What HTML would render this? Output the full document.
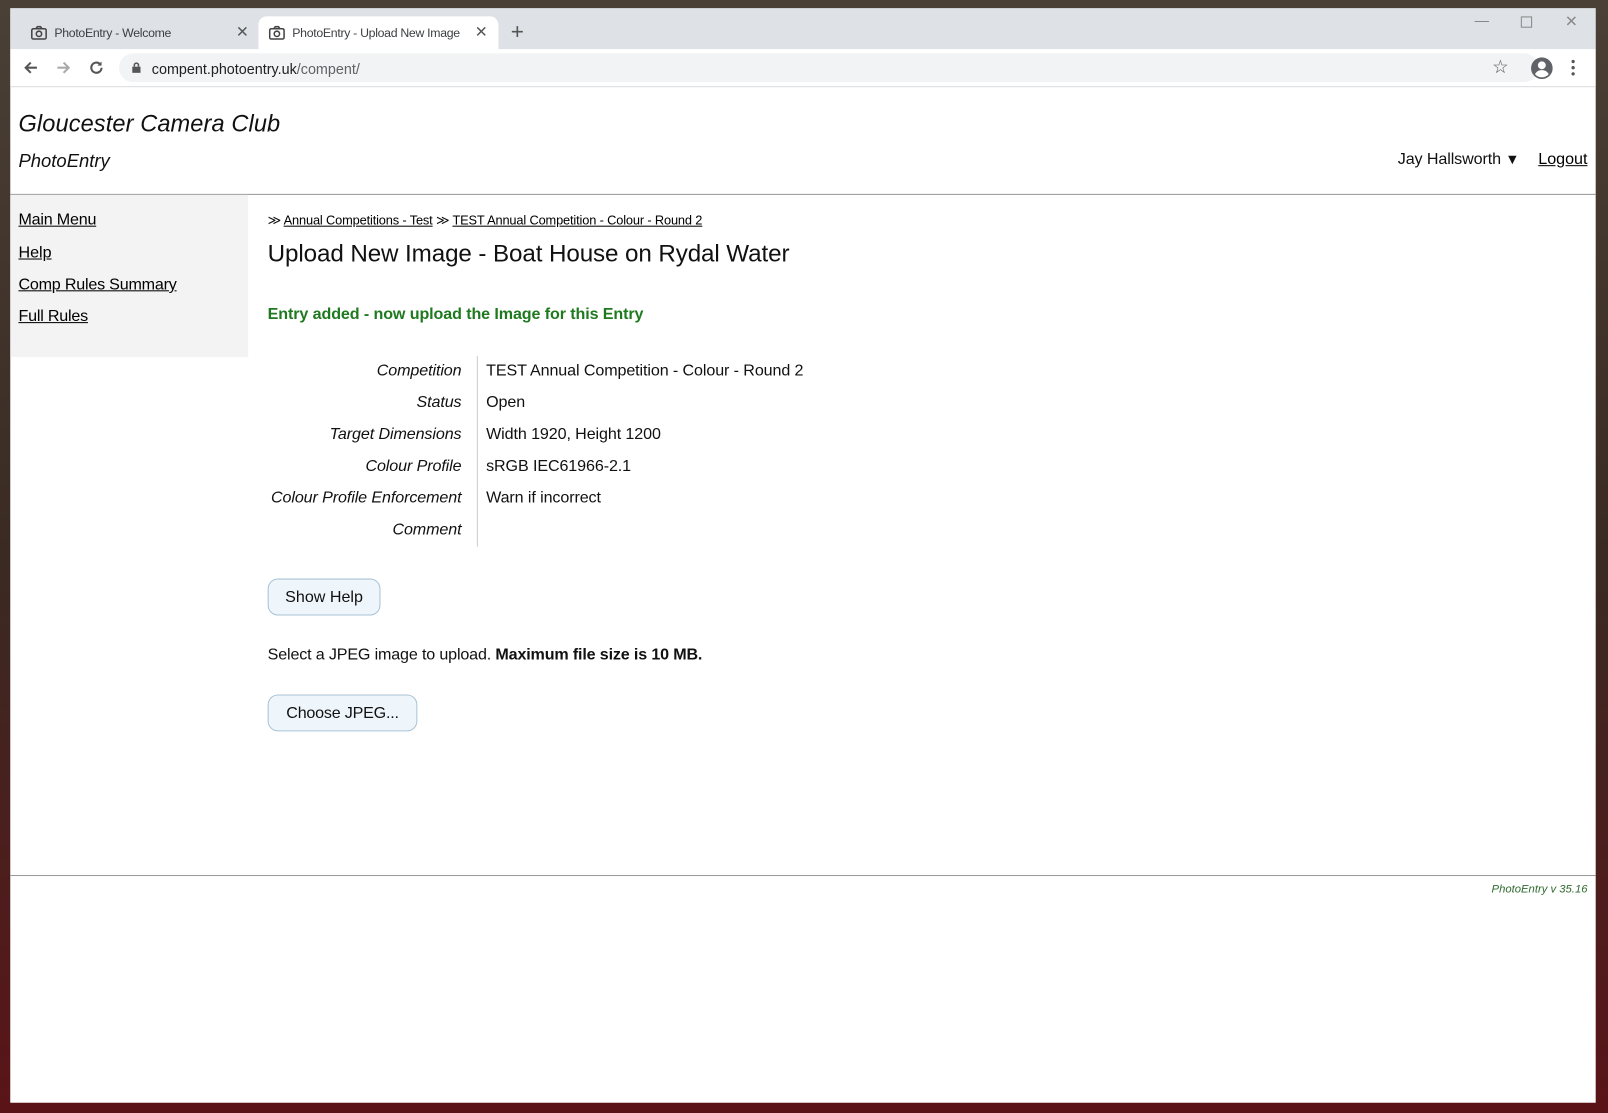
<!DOCTYPE html>
<html><head><meta charset="utf-8"><style>
html,body{margin:0;padding:0;width:1608px;height:1113px;overflow:hidden;}
body{background:linear-gradient(180deg,#4a4036 0%,#3a2a22 50%,#5a1418 100%);font-family:"Liberation Sans",Arial,sans-serif;}
#w{position:absolute;left:0;top:0;width:1568px;height:1085px;transform:scale(1.02551,1.0258);transform-origin:0 0;}
.a{position:absolute;white-space:nowrap;}
#win{position:absolute;left:10px;top:8px;width:1546px;height:1067px;background:#fff;overflow:hidden;}
#tabs{position:absolute;left:0;top:0;width:1546px;height:40px;background:#dee1e6;}
#bar{position:absolute;left:0;top:40px;width:1546px;height:36px;background:#fff;border-bottom:1px solid #dadce0;}
.tab{position:absolute;top:8px;height:32px;font-size:12px;color:#3c4043;}
a,.u{color:#000;text-decoration:underline;}
.lab{position:absolute;right:1106px;font-style:italic;font-size:15.7px;color:#111;letter-spacing:-0.1px;}
.val{position:absolute;left:464px;font-size:15.7px;color:#111;letter-spacing:-0.1px;}
.btn{position:absolute;background:#eef6fb;border:1px solid #a9c3d6;border-radius:10px;font-size:15.7px;color:#111;text-align:center;box-sizing:border-box;}
</style></head><body><div id="w">
<div id="win">
<div id="tabs">
 <div class="tab" style="left:10px;width:232px;">
  <svg class="a" style="left:10px;top:9px" width="16" height="14" viewBox="0 0 16 14"><rect x="1" y="3" width="14" height="10" rx="1.5" fill="none" stroke="#444" stroke-width="1.5"/><path d="M5 3l1.5-2h3L11 3" fill="none" stroke="#444" stroke-width="1.5"/><circle cx="8" cy="8" r="2.6" fill="none" stroke="#444" stroke-width="1.5"/></svg>
  <span class="a" style="left:33px;top:9px;letter-spacing:-0.3px">PhotoEntry - Welcome</span>
  <span class="a" style="left:210px;top:6px;font-size:15px;color:#555">✕</span>
 </div>
 <div class="tab" style="left:242px;width:234px;background:#fff;border-radius:8px 8px 0 0;">
  <svg class="a" style="left:10px;top:9px" width="16" height="14" viewBox="0 0 16 14"><rect x="1" y="3" width="14" height="10" rx="1.5" fill="none" stroke="#444" stroke-width="1.5"/><path d="M5 3l1.5-2h3L11 3" fill="none" stroke="#444" stroke-width="1.5"/><circle cx="8" cy="8" r="2.6" fill="none" stroke="#444" stroke-width="1.5"/></svg>
  <span class="a" style="left:33px;top:9px;letter-spacing:-0.3px">PhotoEntry - Upload New Image</span>
  <span class="a" style="left:208px;top:6px;font-size:15px;color:#555;background:#fff;padding-left:3px">✕</span>
 </div>
 <span class="a" style="left:488px;top:12px;font-size:22px;color:#555;line-height:22px">+</span>
 <span class="a" style="left:1428px;top:4px;font-size:14px;color:#888">—</span>
 <div class="a" style="left:1473px;top:8px;width:9px;height:9px;border:1px solid #888"></div>
 <span class="a" style="left:1516px;top:4px;font-size:15px;color:#888">✕</span>
</div>
<div id="bar">
 <svg class="a" style="left:12px;top:10px" width="16" height="16" viewBox="0 0 16 16"><path d="M14 8H3M8 3L3 8l5 5" fill="none" stroke="#555" stroke-width="2"/></svg>
 <svg class="a" style="left:44px;top:10px" width="16" height="16" viewBox="0 0 16 16"><path d="M2 8h11M8 3l5 5-5 5" fill="none" stroke="#aaa" stroke-width="2"/></svg>
 <svg class="a" style="left:76px;top:10px" width="16" height="16" viewBox="0 0 16 16"><path d="M13 8a5 5 0 1 1-1.5-3.6" fill="none" stroke="#555" stroke-width="2"/><path d="M13 2v4h-4z" fill="#555"/></svg>
 <div class="a" style="left:106px;top:4px;width:1384px;height:28px;background:#f1f3f4;border-radius:14px;"></div>
 <svg class="a" style="left:118px;top:12px" width="10" height="12" viewBox="0 0 10 12"><rect x="1" y="5" width="8" height="6" fill="#555"/><path d="M3 5V3.5a2 2 0 0 1 4 0V5" fill="none" stroke="#555" stroke-width="1.5"/></svg>
 <span class="a" style="left:138px;top:11px;font-size:14px;color:#202124">compent.photoentry.uk<span style="color:#5f6368">/compent/</span></span>
 <span class="a" style="left:1445px;top:7px;font-size:18px;color:#555">☆</span>
 <svg class="a" style="left:1482px;top:7px" width="23" height="23" viewBox="0 0 24 24"><circle cx="12" cy="12" r="11" fill="#5f6368"/><circle cx="12" cy="9" r="4" fill="#fff"/><path d="M5 18c2-3 4-4 7-4s5 1 7 4a9 9 0 0 1-14 0z" fill="#fff"/></svg>
 <svg class="a" style="left:1522px;top:10px" width="4" height="16" viewBox="0 0 4 16"><circle cx="2" cy="2" r="1.6" fill="#555"/><circle cx="2" cy="8" r="1.6" fill="#555"/><circle cx="2" cy="14" r="1.6" fill="#555"/></svg>
</div>

<span class="a" style="left:8px;top:99px;font-size:23px;font-style:italic;color:#111;letter-spacing:0.1px">Gloucester Camera Club</span>
<span class="a" style="left:8px;top:139px;font-size:18px;font-style:italic;color:#111">PhotoEntry</span>
<span class="a" style="left:1353px;top:139px;font-size:15.7px;color:#111;letter-spacing:-0.1px">Jay Hallsworth <span style="font-size:14px">▼</span></span>
<span class="a u" style="left:1490px;top:139px;font-size:15.7px">Logout</span>
<div class="a" style="left:0;top:181px;width:1546px;height:1px;background:#999"></div>

<div class="a" style="left:0;top:182px;width:232px;height:158px;background:#f3f3f3"></div>
<span class="a u" style="left:8px;top:198px;font-size:15.7px;letter-spacing:-0.2px">Main Menu</span>
<span class="a u" style="left:8px;top:230px;font-size:15.7px">Help</span>
<span class="a u" style="left:8px;top:261px;font-size:15.7px;letter-spacing:-0.2px">Comp Rules Summary</span>
<span class="a u" style="left:8px;top:292px;font-size:15.7px;letter-spacing:-0.2px">Full Rules</span>

<span class="a" style="left:251px;top:199px;font-size:12.5px;color:#111;letter-spacing:-0.15px">≫ <span class="u">Annual Competitions - Test</span> ≫ <span class="u">TEST Annual Competition - Colour - Round 2</span></span>
<span class="a" style="left:251px;top:227px;font-size:23.6px;color:#111;letter-spacing:-0.1px">Upload New Image - Boat House on Rydal Water</span>
<span class="a" style="left:251px;top:290px;font-size:15.7px;font-weight:bold;color:#1f7a1f;letter-spacing:-0.1px">Entry added - now upload the Image for this Entry</span>

<div class="a" style="left:455px;top:339px;width:1px;height:186px;background:#ccc"></div>
<span class="lab" style="top:345px">Competition</span><span class="val" style="top:345px">TEST Annual Competition - Colour - Round 2</span>
<span class="lab" style="top:376px">Status</span><span class="val" style="top:376px">Open</span>
<span class="lab" style="top:407px">Target Dimensions</span><span class="val" style="top:407px">Width 1920, Height 1200</span>
<span class="lab" style="top:438px">Colour Profile</span><span class="val" style="top:438px">sRGB IEC61966-2.1</span>
<span class="lab" style="top:469px">Colour Profile Enforcement</span><span class="val" style="top:469px">Warn if incorrect</span>
<span class="lab" style="top:500px">Comment</span>

<div class="btn" style="left:251px;top:556px;width:110px;height:36px;line-height:35px">Show Help</div>
<span class="a" style="left:251px;top:622px;font-size:15.7px;color:#111;letter-spacing:-0.15px">Select a JPEG image to upload. <b>Maximum file size is 10 MB.</b></span>
<div class="btn" style="left:251px;top:669px;width:146px;height:36px;line-height:35px;letter-spacing:-0.2px">Choose JPEG...</div>

<div class="a" style="left:0;top:845px;width:1546px;height:1px;background:#999"></div>
<span class="a" style="right:8px;top:853px;font-size:11px;font-style:italic;color:#2f6b2f">PhotoEntry v 35.16</span>
</div>
</div></body></html>
